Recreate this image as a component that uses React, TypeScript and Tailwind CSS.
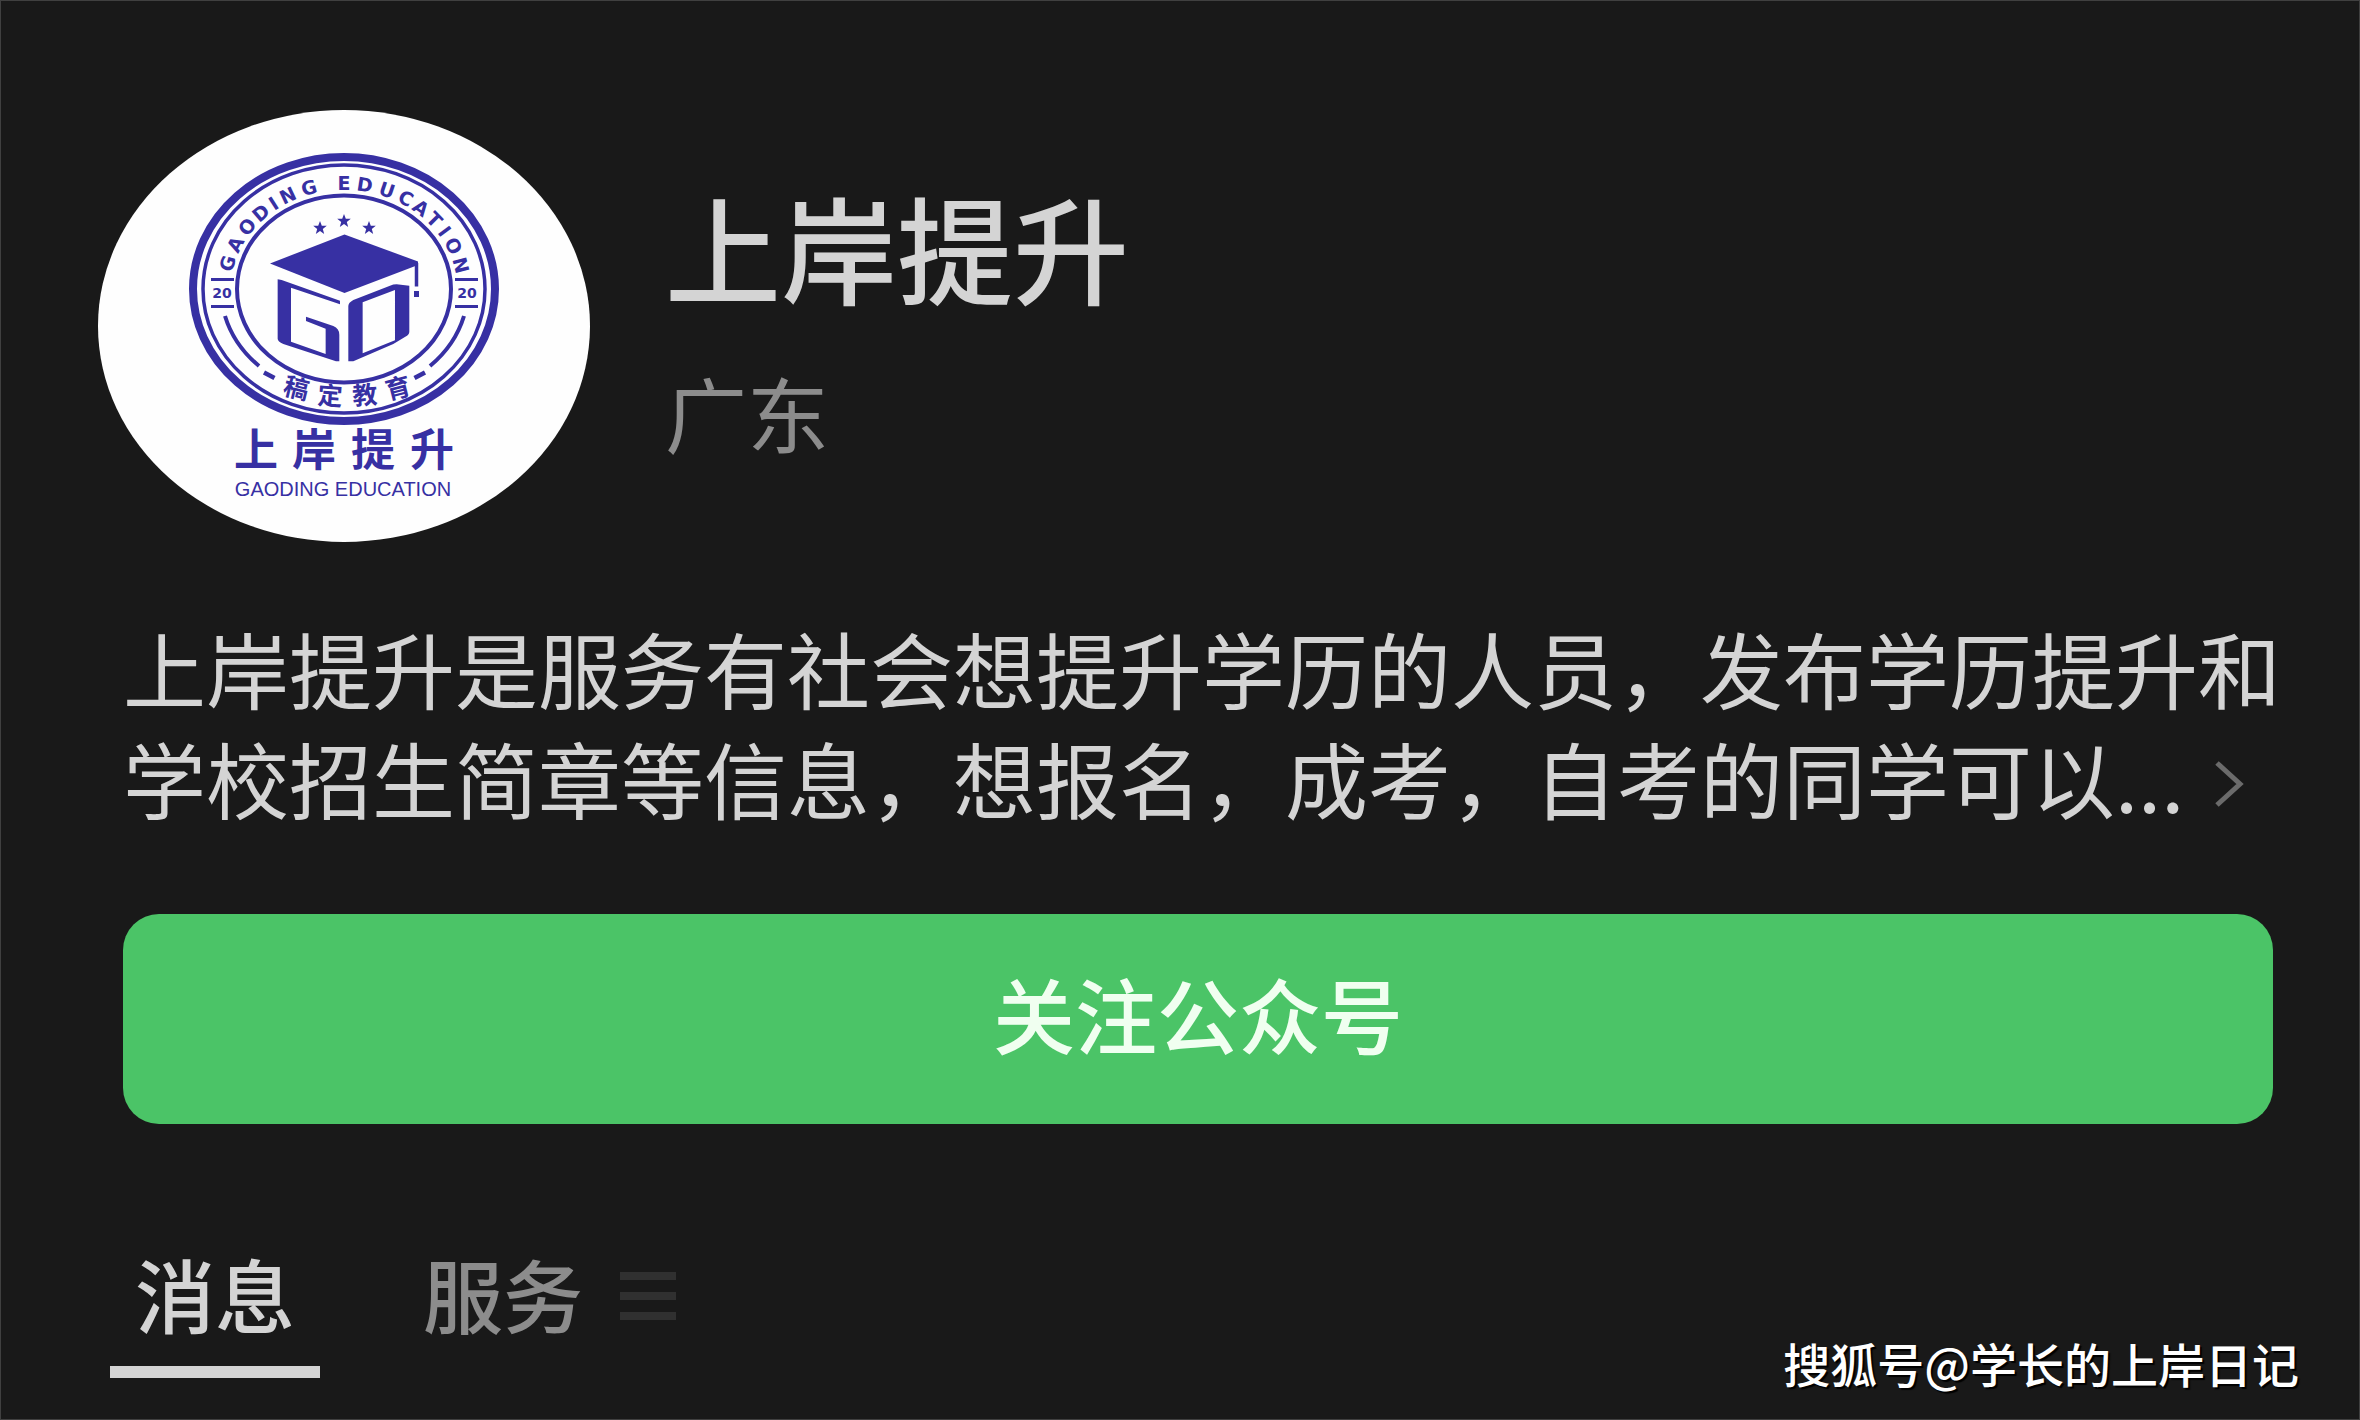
import React, { useState } from "react";

const INK = "#3730a3";
const CENTER = { x: 246, y: 179 };

// advance widths (em) of the bold face used on the ring
const ADVANCE: Record<string, number> = {
  A: 0.774,
  C: 0.734,
  D: 0.83,
  E: 0.683,
  G: 0.821,
  I: 0.372,
  N: 0.837,
  O: 0.85,
  T: 0.682,
  U: 0.812,
};

// Places every letter on the ellipse, centered on its angle
const getRingLayout = (word: string, angles: number[], size: number) => {
  const xs: number[] = [];
  const ys: number[] = [];
  const rotations: number[] = [];

  word.split("").forEach((letter, index) => {
    const t = (angles[index] * Math.PI) / 180;
    const rx = 120;
    const ry = 106;
    const dx = rx * Math.sin(t);
    const dy = ry * Math.cos(t);
    const length = Math.hypot(dx, dy);
    const tx = dx / length;
    const ty = dy / length;
    const half = (ADVANCE[letter] * size) / 2;
    const drop = size * 0.365;

    xs.push(CENTER.x + rx * Math.cos(t) - tx * half - ty * drop);
    ys.push(CENTER.y - ry * Math.sin(t) - ty * half + tx * drop);
    rotations.push((Math.atan2(ty, tx) * 180) / Math.PI);
  });

  return { x: xs.join(" "), y: ys.join(" "), rotate: rotations.join(" ") };
};

const gaoding = getRingLayout("GAODING", [166, 155, 144, 134, 126, 118, 107], 19);
const education = getRingLayout(
  "EDUCATION",
  [90, 80, 69, 59, 50, 41, 33, 24, 13],
  19
);

const STAR = "M0-7 1.8-2.2 6.8-2.2 2.8 1 4.2 6 0 3-4.2 6-2.8 1-6.8-2.2-1.8-2.2Z";

const Avatar: React.FC = () => (
  <svg
    className="h-[432px] w-[492px] shrink-0"
    viewBox="0 0 492 432"
    role="img"
    aria-label="上岸提升"
  >
    <ellipse cx="246" cy="216" rx="246" ry="216" fill="#fefefe" />

    <g fill="none" stroke={INK}>
      <ellipse cx={CENTER.x} cy={CENTER.y} rx="151" ry="132" strokeWidth="8" />
      <ellipse cx={CENTER.x} cy={CENTER.y} rx="141" ry="124" strokeWidth="3.5" />
      <ellipse cx={CENTER.x} cy={CENTER.y} rx="107" ry="93.5" strokeWidth="4" />
      <path d="M113 169.500H136M113 196.500H136M357 169.500H380M357 196.500H380" strokeWidth="3.200" />
      <path d="M127 206A122 107 0 0 0 161 256M366 206A122 107 0 0 1 332 256" strokeWidth="4" />
      <path d="M166 262.500 176.500 268M316.500 268 327 262.500" strokeWidth="4.500" />
      <path d="M318.500 153V176.500" strokeWidth="3.500" />
    </g>

    <g fill={INK} className="font-['DejaVu_Sans',sans-serif] font-bold">
      <text {...gaoding} fontSize="19">GAODING</text>
      <text {...education} fontSize="19">EDUCATION</text>
      <text x="124" y="188" fontSize="14" textAnchor="middle">20</text>
      <text x="369" y="188" fontSize="14" textAnchor="middle">20</text>
    </g>

    <g fill={INK}>
      <path d={STAR} transform="translate(222 118)" />
      <path d={STAR} transform="translate(246 111)" />
      <path d={STAR} transform="translate(271 118)" />
      <path d="M246.500 124.500 320 151.500V155L246.500 183 172 153.500Z" />
      <rect x="316" y="181" width="5" height="6" />
      {/* GO monogram under the cap */}
      <g transform="translate(82 30) scale(0.3333)">
        <path d="M293 418 305 420 480 482V493L333 443V605L437 642V566L378 543V530L460 558Q478 566 478 584V664H468L310 612Q293 604 293 596Z" />
        <path
          fillRule="evenodd"
          d="M505 498Q505 488 520 480L630 437Q640 433 650 433L688 437V575Q688 584 676 590L640 612 520 664H505ZM548 487 645 450V601L548 640Z"
        />
      </g>
    </g>

    <g fill={INK} className="font-['Noto_Sans_CJK_SC',sans-serif] font-bold">
      <text x="184 219 255 290" y="284 294 295 290" rotate="14 4 -4 -14" fontSize="25">
        稿定教育
      </text>
      <text x="136 194 253 312" y="356" fontSize="44">
        上岸提升
      </text>
    </g>
    <text
      x="245"
      y="386"
      fontSize="20"
      textAnchor="middle"
      fill={INK}
      className="font-['Liberation_Sans',sans-serif]"
    >
      GAODING EDUCATION
    </text>
  </svg>
);

const tabs = [
  { id: "messages", label: "消息" },
  { id: "services", label: "服务" },
];

const App: React.FC = () => {
  const [activeTab, setActiveTab] = useState("messages");

  return (
    <main
      lang="zh-CN"
      className="relative min-h-screen border border-[#404040] bg-[#191919] pt-[109px] font-['Noto_Sans_CJK_SC',sans-serif] text-[#d4d4d4]"
    >
      <header className="flex items-center gap-[75px] pl-[97px]">
        <Avatar />
        <div className="flex flex-col gap-[68px] pb-3">
          <h1 className="text-[116px] leading-[116px] font-medium">上岸提升</h1>
          <p className="text-[82px] leading-[82px] text-[#8c8c8c]">广东</p>
        </div>
      </header>

      <section className="mt-[70px] pr-[86px] pl-[122px]">
        <p className="-mr-5 text-[83px] leading-[110px]">
          上岸提升是服务有社会想提升学历的人员，发布学历提升和学校招生简章等信息，想报名，成考，自考的同学可以...
          <button type="button" aria-label="展开" className="ml-[30px] inline-block align-[6px]">
            <svg className="h-[46px] w-[30px]" viewBox="0 0 30 46" fill="none">
              <path d="M3 2 26 23 3 44" stroke="#6b6b6b" strokeWidth="5" />
            </svg>
          </button>
        </p>

        <button
          type="button"
          className="mt-[82px] block h-[210px] w-full rounded-[36px] bg-[#4bc467] pb-3 text-[82px] leading-[82px] font-medium text-[#f0fff0]"
        >
          关注公众号
        </button>
      </section>

      <nav className="mt-[128px] flex items-start pl-[109px]">
        <div className="flex gap-[78px]">
          {tabs.map((tab) => (
            <button
              key={tab.id}
              type="button"
              onClick={() => setActiveTab(tab.id)}
              className={
                activeTab === tab.id
                  ? "border-b-12 border-[#d4d4d4] px-[25px] pb-[34px] text-[80px] leading-[80px] font-medium"
                  : "border-b-12 border-transparent px-[25px] pb-[34px] text-[80px] leading-[80px] font-medium text-[#8c8c8c]"
              }
            >
              {tab.label}
            </button>
          ))}
        </div>
        <button
          type="button"
          aria-label="菜单"
          className="mt-5 ml-3 flex w-14 flex-col gap-3"
        >
          <span className="h-2 w-full bg-[#303030]" />
          <span className="h-2 w-full bg-[#303030]" />
          <span className="h-2 w-full bg-[#303030]" />
        </button>
      </nav>

      <p className="absolute right-[60px] bottom-8 text-[47px] leading-12 font-medium text-white [text-shadow:2px_2px_1px_#000]">
        搜狐号@学长的上岸日记
      </p>
    </main>
  );
};

export default App;
